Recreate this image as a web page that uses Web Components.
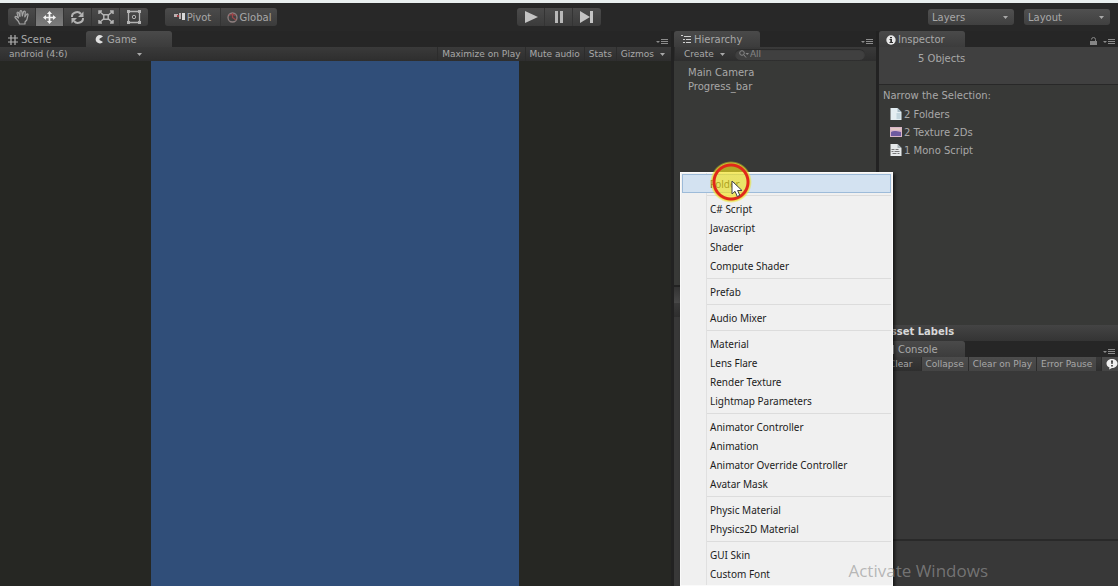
<!DOCTYPE html>
<html lang="en">
<head>
<meta charset="utf-8">
<title>Editor</title>
<style>
  html, body {
    margin: 0;
    height: 100%;
  }

  body {
    overflow: hidden;
    font-family: "DejaVu Sans", sans-serif;
    font-size: 10px;
    color: #a8a8a8;
    background: #282828;
  }
</style>
</head>
<body>
<editor-app></editor-app>

<script>
/** @const {Object} - SVG markup of every icon, by name. */
const ICONS = {
  hand: `<svg width="16" height="16" viewBox="0 0 16 16" fill="none" stroke="#a4a4a4" stroke-width="1.2" stroke-linejoin="round" stroke-linecap="round"><path d="M5.5 15 4.5 12.500 1 8.500Q1 7 2.500 7.500L4.500 9 3 4Q3.300 2.700 4.500 3.500L6 7.500 6 2.500Q6.800 1 7.800 2.300L8.300 7 9.600 2.500Q10.800 1.500 11.300 3L10.800 7.800 12.800 5Q14.200 4.500 14 6L12.800 11 11 13 11 15Z"/></svg>`,
  move: `<svg width="13" height="13" viewBox="0 0 15 15" fill="#f2f2f2"><path d="M7.500 0 10.500 3.500H8.500V6.500H11.500V4.500L15 7.500 11.500 10.500V8.500H8.500V11.500H10.500L7.500 15 4.500 11.500H6.500V8.500H3.500V10.500L0 7.500 3.500 4.500V6.500H6.500V3.500H4.500Z"/></svg>`,
  rotate: `<svg width="15" height="15" viewBox="0 0 15 15"><path d="M2 7A5 4.500 0 0 1 11 4M13 8A5 4.500 0 0 1 4 11" fill="none" stroke="#b4b4b4" stroke-width="2"/><path d="M13.500 1.500V7H8ZM1.500 13.500V8H7Z" fill="#b4b4b4"/></svg>`,
  scale: `<svg width="16" height="16" viewBox="0 0 16 16" fill="none" stroke="#b4b4b4" stroke-width="1.5"><path d="M1 5V2H4M12 2H15V5M15 11V14H12M4 14H1V11M1.500 2.500 5.500 6M14.500 2.500 10.500 6M1.500 13.500 5.500 10M14.500 13.500 10.500 10M5.800 5.800H10.200V10.200H5.800Z"/></svg>`,
  rect: `<svg width="16" height="16" viewBox="0 0 16 16" fill="none" stroke="#b4b4b4"><path stroke-width="1.300" d="M2.500 2.500H13.500V13.500H2.500Z"/><path fill="#b4b4b4" stroke="none" d="M1 1H4V4H1ZM12 1H15V4H12ZM1 12H4V15H1ZM12 12H15V15H12Z"/><circle cx="8" cy="8" r="1.700"/></svg>`,
  pivot: `<svg width="11" height="8" viewBox="0 0 11 8"><path fill="#b9b0b0" d="M0 1H4V4H0ZM5 0H7V6H5Z"/><path fill="#d9d9d9" d="M8 0H11V7H8Z"/><path fill="#a03a40" d="M3 2H5V4H3Z"/></svg>`,
  global: `<svg width="11" height="11" viewBox="0 0 11 11" fill="none"><circle cx="5.500" cy="5.500" r="4.500" stroke="#8f8080" stroke-width="1.300"/><path stroke="#a04448" stroke-width="1.200" d="M2 3.500Q5 1.500 8.500 3.500M5.500 1V5.500L9 8"/></svg>`,
  play: `<svg width="14" height="12" viewBox="0 0 14 12" fill="#c4c4c4"><path d="M1 0 14 6 1 12Z"/></svg>`,
  pause: `<svg width="10" height="12" viewBox="0 0 10 12" fill="#b8b8b8"><path d="M1 0H4V12H1ZM6 0H9V12H6Z"/></svg>`,
  step: `<svg width="14" height="12" viewBox="0 0 14 12" fill="#c4c4c4"><path d="M0 0 10 6V0H13V12H10V6L0 12Z"/></svg>`,
  scene: `<svg width="12" height="12" viewBox="0 0 12 12" fill="none" stroke="#b0b0b0" stroke-width="1.200"><path d="M4 1V11M8 1V11M1 4H11M1 8H11"/></svg>`,
  game: `<svg width="12" height="9" viewBox="-2 0 12 9" fill="#e0e0e0"><path d="M8 1.500 4.500 3.800V5L8 7A4.200 4.200 0 1 1 8 1.500Z"/></svg>`,
  hierarchy: `<svg width="11" height="9" viewBox="0 0 11 9" fill="#d0d0d0"><path d="M0 0H2V1H0ZM3 1H10V2H3ZM2 4H4V5H2ZM5 4H10V5H5ZM2 7H4V8H2ZM5 7H10V8H5Z"/></svg>`,
  info: `<svg width="10" height="10" viewBox="0 0 10 10"><circle cx="5" cy="5" r="4.700" fill="#e8e8e8"/><path fill="#303030" d="M4 2H6V3.300H4ZM3.500 4H6V7H7V8H3.500V7H4.300V5H3.500Z"/></svg>`,
  console: `<svg width="10" height="9" viewBox="0 0 10 9"><path fill="#c8c8c8" d="M0 0H8V9H0Z"/><path fill="#444" d="M1 2H7V3H1ZM1 5H7V6H1Z"/></svg>`,
  alert: `<svg width="12" height="12" viewBox="0 0 12 12"><path fill="#f0f0f0" d="M6 1C9 1 11.500 3 11.500 5.500S9 10 6 10L3 11.500 3.500 9.500C1.500 8.500.500 7.500.500 5.500.500 3 3 1 6 1Z"/><path fill="#333" d="M5 2.500H7L6.600 6H5.400ZM5.200 7H6.800V8.500H5.200Z"/></svg>`,
  panelMenu: `<svg width="12" height="6" viewBox="0 0 12 6" fill="#8c8c8c"><path d="M0 2H4L2 4ZM5 0H12V1H5ZM5 2H12V3H5ZM5 4H12V5H5Z"/></svg>`,
  lock: `<svg width="7" height="8" viewBox="0 0 7 8"><path fill="#858585" d="M0 4H7V8H0Z"/><path fill="none" stroke="#858585" d="M1.500 2.500Q1.500.500 3.500.500T5.500 2.500V4"/></svg>`,
  arrow: `<svg width="5" height="3" viewBox="0 0 5 3" fill="#a8a8a8"><path d="M0 0H5L2.500 3Z"/></svg>`,
  search: `<svg width="11" height="8" viewBox="0 0 11 8" fill="none" stroke="#888"><circle cx="3" cy="3" r="2.300"/><path d="M4.700 4.700 7 7.500"/><path d="M6.500 3H10L8.200 5Z" fill="#888" stroke="none"/></svg>`,
  folder: `<svg width="11" height="12" viewBox="0 0 11 12"><path fill="#e4eef2" d="M0 0H7L11 4V12H0Z"/><path fill="#a8bcc6" d="M7 0V4H11Z"/><path fill="#c3d6de" d="M6 5H10V11H6Z"/></svg>`,
  texture: `<svg width="12" height="10" viewBox="0 0 12 10"><path fill="#d9b6c8" d="M0 0H12V10H0Z"/><path fill="#6f5aa0" d="M1 9V5Q3 3.500 6 4T11 5V9Z"/><path fill="#e4c8c4" d="M1 1H11V3H1Z"/></svg>`,
  script: `<svg width="11" height="12" viewBox="0 0 11 12"><path fill="#e6e9ea" d="M0 0H7L11 4V12H0Z"/><path fill="#a8b2b6" d="M7 0V4H11Z"/><path fill="#777" d="M1 5H4V6H1ZM5 5H8V6H5ZM1 7H3V8H1ZM4 7H9V8H4ZM2 9H6V10H2ZM7 9H9V10H7Z"/></svg>`,
  pointer: `<svg width="13" height="18" viewBox="0 0 13 18"><path fill="#fff" stroke="#444" d="M1 1V14L4 11.300 6.300 16.500 8.800 15.300 6.600 10.500H11Z"/></svg>`
};

/**
 * Attach an open shadow root holding the given markup.
 *
 * @param {HTMLElement} host - The custom element.
 * @param {string} html - Styles and markup.
 * @return {ShadowRoot}
 */
function render(host, html) {
  const template = document.createElement("template");
  template.innerHTML = `
    <style>
      :host { display: block; box-sizing: border-box; }
      *, *::before { box-sizing: border-box; }
      svg { display: block; flex: none; }
      button, input, select {
        margin: 0; padding: 0; border: 0; background: none;
        font: inherit; color: inherit; outline: 0; appearance: none;
      }
      button { white-space: nowrap; }
    </style>${html}`;
  const root = host.attachShadow({ mode: "open" });
  root.appendChild(template.content.cloneNode(true));
  return root;
}

class ButtonStrip extends HTMLElement {
  constructor() {
    super();
    render(this, `
      <style>
        :host { flex: none; }
        div {
          display: flex;
          height: 18px;
          border-radius: 3px;
          overflow: hidden;
          background: linear-gradient(#4b4b4b, #3b3b3b);
        }
        ::slotted(*) { flex: none; }
      </style>
      <div><slot></slot></div>`);
  }
}

class ToolButton extends HTMLElement {
  constructor() {
    super();
    const icon = ICONS[this.getAttribute("icon")] || "";
    render(this, `
      <style>
        button {
          display: flex;
          align-items: center;
          justify-content: center;
          gap: 2px;
          width: 100%;
          min-width: 28px;
          height: 18px;
          padding: 0 4px;
          border-right: 1px solid #343434;
        }
        :host([wide]) button { min-width: 56px; }
        :host(:last-child) button { border-right: 0; }
        :host([active]) button { background: linear-gradient(#686868, #7c7c7c); }
      </style>
      <button type="button" aria-label="${this.getAttribute("label") || this.textContent}">${icon}<slot></slot></button>`);
  }
}

class DropDown extends HTMLElement {
  constructor() {
    super();
    const label = this.getAttribute("label");
    render(this, `
      <style>
        :host { flex: none; width: 86px; }
        label {
          display: flex;
          align-items: center;
          height: 16px;
          padding: 0 6px 0 4px;
          border-radius: 3px;
          background: linear-gradient(#505050, #404040);
        }
        :host([flat]) { width: 148px; }
        :host([flat]) label { padding-left: 9px; background: none; border-radius: 0; }
        select { flex: 1; min-width: 0; }
      </style>
      <label><select aria-label="${label}"><option>${label}</option></select>${ICONS.arrow}</label>`);
  }
}

class MainToolbar extends HTMLElement {
  constructor() {
    super();
    render(this, `
      <style>
        header {
          display: grid;
          grid-template-columns: 1fr auto 1fr;
          align-items: center;
          height: 31px;
          padding: 0 8px;
          border-top: 3px solid #e9efef;
          background: #282828;
        }
        .left { display: flex; gap: 17px; }
        .right { display: flex; justify-content: flex-end; gap: 10px; }
      </style>
      <header>
        <div class="left">
          <button-strip>
            <tool-button icon="hand" label="Hand"></tool-button>
            <tool-button icon="move" label="Move" active></tool-button>
            <tool-button icon="rotate" label="Rotate"></tool-button>
            <tool-button icon="scale" label="Scale"></tool-button>
            <tool-button icon="rect" label="Rect"></tool-button>
          </button-strip>
          <button-strip>
            <tool-button icon="pivot" wide>Pivot</tool-button>
            <tool-button icon="global" wide>Global</tool-button>
          </button-strip>
        </div>
        <button-strip>
          <tool-button icon="play" label="Play"></tool-button>
          <tool-button icon="pause" label="Pause"></tool-button>
          <tool-button icon="step" label="Step"></tool-button>
        </button-strip>
        <div class="right">
          <drop-down label="Layers"></drop-down>
          <drop-down label="Layout"></drop-down>
        </div>
      </header>`);
  }
}

class PanelTab extends HTMLElement {
  constructor() {
    super();
    render(this, `
      <style>
        :host { flex: none; width: 86px; }
        button {
          display: flex;
          align-items: center;
          gap: 2px;
          width: 100%;
          height: 16px;
          padding: 1px 7px 0;
          border-radius: 3px 3px 0 0;
        }
        :host([active]) button { background: linear-gradient(#4a4a4a, #3c3c3c); }
      </style>
      <button type="button">${ICONS[this.getAttribute("icon")]}<slot></slot></button>`);
  }
}

class EditorPanel extends HTMLElement {
  constructor() {
    super();
    const lock = this.hasAttribute("lockable") ? ICONS.lock : "";
    render(this, `
      <style>
        :host { display: flex; flex-direction: column; min-width: 0; min-height: 0; }
        .tabs { display: flex; flex: none; height: 16px; background: var(--panel-tabs, #262626); }
        .menu { display: flex; align-items: flex-end; gap: 6px; margin-left: auto; padding: 0 3px 2px; }
        .bar {
          display: flex;
          flex: none;
          align-items: center;
          height: 14px;
          font-size: 9px;
          background: linear-gradient(#3a3a3a, #2e2e2e);
        }
        :host([barless]) .bar { display: none; }
        .body { flex: 1; min-height: 0; background: var(--panel-body, #383838); }
      </style>
      <div class="tabs">
        <slot name="tab"></slot>
        <div class="menu">${lock}<button type="button" aria-label="Panel menu">${ICONS.panelMenu}</button></div>
      </div>
      <div class="bar"><slot name="bar"></slot></div>
      <div class="body"><slot></slot></div>`);
  }
}

class SearchField extends HTMLElement {
  constructor() {
    super();
    render(this, `
      <style>
        :host { flex: 1; min-width: 0; margin: 0 11px 0 6px; }
        label {
          display: flex;
          align-items: center;
          height: 11px;
          padding: 0 4px;
          border-radius: 6px;
          background: #404040;
          color: #858585;
          box-shadow: inset 0 1px 1px #2a2a2a;
        }
        input { flex: 1; min-width: 0; height: 11px; }
      </style>
      <label>${ICONS.search}<input type="text" aria-label="Search" value="All"></label>`);
  }
}

class GameView extends HTMLElement {
  constructor() {
    super();
    render(this, `
      <style>
        :host { height: 100%; background: #262723; }
        .stage { height: 100%; margin: 0 152px 0 151px; background: #304e79; }
      </style>
      <div class="stage"></div>`);
  }
}

class SelectionRow extends HTMLElement {
  constructor() {
    super();
    render(this, `
      <style>
        button { display: flex; align-items: center; gap: 2px; height: 18px; padding-left: 11px; }
        svg { width: 12px; }
      </style>
      <button type="button">${ICONS[this.getAttribute("icon")]}<slot></slot></button>`);
  }
}

class CreateMenu extends HTMLElement {
  constructor() {
    super();
    /** @const {Array[]} - Menu entries; a separator stands between two groups. */
    const groups = [
      ["Folder"],
      ["C# Script", "Javascript", "Shader", "Compute Shader"],
      ["Prefab"],
      ["Audio Mixer"],
      ["Material", "Lens Flare", "Render Texture", "Lightmap Parameters"],
      ["Animator Controller", "Animation", "Animator Override Controller", "Avatar Mask"],
      ["Physic Material", "Physics2D Material"],
      ["GUI Skin", "Custom Font"]
    ];
    const root = render(this, `
      <style>
        .menu {
          min-height: 100%;
          padding: 1px;
          border: 1px solid #fafafa;
          color: #1c1c1c;
          background: linear-gradient(90deg, #f0f0f0 25px, #e0e0e0 25px, #e0e0e0 26px, #f0f0f0 26px);
          font-family: "Noto Sans", sans-serif;
          font-size: 10px;
          box-shadow: 2px 2px 3px rgba(0, 0, 0, 0.6);
        }
        button { display: block; width: 100%; height: 19px; padding-left: 28px; text-align: left; }
        button.hover { background: #d3e2f1; box-shadow: 0 0 0 1px #9dbbd9 inset; }
        hr { height: 1px; margin: 3px 0 3px 25px; border: 0; background: #dcdcdc; }
        button.hover + hr { margin-top: 2px; }
      </style>
      <div class="menu" role="menu"></div>`);
    root.querySelector(".menu").innerHTML = groups
      .map(group => group.map(item => `<button type="button" role="menuitem">${item}</button>`).join(""))
      .join("<hr>");
    root.querySelector("button").classList.add("hover");
  }
}

class ClickMarker extends HTMLElement {
  constructor() {
    super();
    render(this, `
      <style>
        :host { width: 42px; height: 42px; pointer-events: none; }
        .ring {
          width: 42px;
          height: 42px;
          border-radius: 50%;
          background: radial-gradient(circle, rgba(245, 228, 30, 0.65) 15px, #e0281a 16px, #e0281a 18px, rgba(235, 225, 40, 0.8) 19px, rgba(235, 225, 40, 0) 21px);
        }
        svg { position: absolute; left: 21px; top: 19px; }
      </style>
      <div class="ring"></div>${ICONS.pointer}`);
  }
}

class EditorApp extends HTMLElement {
  constructor() {
    super();
    render(this, `
      <style>
        :host { position: relative; display: flex; flex-direction: column; height: 100vh; overflow: hidden; }
        main {
          flex: 1;
          display: grid;
          grid-template-columns: 1fr 202px 239px;
          gap: 3px;
          min-height: 0;
          background: #222;
        }
        .column { display: flex; flex-direction: column; min-width: 0; min-height: 0; }
        .column > editor-panel { flex: none; }
        .column > .grow { flex: 1; }
        .game { --panel-body: #262723; }
        .hierarchy, .inspector-panel { --panel-body: #383937; }
        .hierarchy { height: 254px; margin-bottom: 2px; }
        .project { --panel-tabs: linear-gradient(#333, #484848); }
        .inspector-panel { height: 294px; }
        .bar-button { height: 14px; padding: 0 4px; border-left: 1px solid #2c2c2c; }
        .bar-group { display: flex; margin-left: auto; padding-right: 2px; }
        .with-arrow { display: flex; align-items: center; gap: 6px; }
        .create, .clear { padding-left: 9px; }
        .clear { margin-right: 4px; }
        .messages { margin-left: 5px; }
        ul { margin: 0; padding: 5px 14px; list-style: none; line-height: 14px; }
        .objects { height: 38px; padding: 6px 39px; border-bottom: 1px solid #282828; background: #404040; }
        .narrow { height: 20px; padding: 5px 4px; margin: 0; }
        .labels {
          flex: none;
          height: 16px;
          padding: 0 4px;
          line-height: 14px;
          font-weight: bold;
          color: #d8d8d8;
          background: linear-gradient(#444, #343434);
        }
        .pressed { background: linear-gradient(#4c4c4c, #444); }
        .log { height: 170px; border-bottom: 2px solid #292929; }
        create-menu { position: absolute; top: 172px; right: 225px; bottom: 0; width: 213px; }
        click-marker { position: absolute; top: 161px; right: 366px; }
        .watermark {
          position: absolute;
          right: 130px;
          bottom: 3px;
          font-family: "Open Sans", sans-serif;
          font-size: 17px;
          line-height: 24px;
          color: rgba(150, 150, 150, 0.65);
          pointer-events: none;
        }
      </style>
      <main-toolbar></main-toolbar>
      <main>
        <editor-panel class="game">
          <panel-tab slot="tab" icon="scene">Scene</panel-tab>
          <panel-tab slot="tab" icon="game" active>Game</panel-tab>
          <drop-down slot="bar" label="android (4:6)" flat></drop-down>
          <div slot="bar" class="bar-group">
            <button class="bar-button" type="button">Maximize on Play</button>
            <button class="bar-button" type="button">Mute audio</button>
            <button class="bar-button" type="button">Stats</button>
            <button class="bar-button with-arrow" type="button">Gizmos ${ICONS.arrow}</button>
          </div>
          <game-view></game-view>
        </editor-panel>
        <div class="column">
          <editor-panel class="hierarchy">
            <panel-tab slot="tab" icon="hierarchy" active>Hierarchy</panel-tab>
            <button slot="bar" class="bar-button with-arrow create" type="button">Create ${ICONS.arrow}</button>
            <search-field slot="bar"></search-field>
            <ul>
              <li>Main Camera</li>
              <li>Progress_bar</li>
            </ul>
          </editor-panel>
          <editor-panel class="grow project"></editor-panel>
        </div>
        <div class="column">
          <editor-panel class="inspector-panel" barless lockable>
            <panel-tab slot="tab" icon="info" active>Inspector</panel-tab>
            <div class="objects">5 Objects</div>
            <p class="narrow">Narrow the Selection:</p>
            <selection-row icon="folder">2 Folders</selection-row>
            <selection-row icon="texture">2 Texture 2Ds</selection-row>
            <selection-row icon="script">1 Mono Script</selection-row>
          </editor-panel>
          <div class="labels">Asset Labels</div>
          <editor-panel class="grow">
            <panel-tab slot="tab" icon="console" active>Console</panel-tab>
            <button slot="bar" class="bar-button clear" type="button">Clear</button>
            <button slot="bar" class="bar-button pressed" type="button">Collapse</button>
            <button slot="bar" class="bar-button pressed" type="button">Clear on Play</button>
            <button slot="bar" class="bar-button pressed" type="button">Error Pause</button>
            <button slot="bar" class="bar-button pressed messages" type="button" aria-label="Messages">${ICONS.alert}</button>
            <div class="log"></div>
          </editor-panel>
        </div>
      </main>
      <create-menu></create-menu>
      <click-marker></click-marker>
      <div class="watermark">Activate Windows</div>`);
  }
}

//  Define the web components, the parts before the app that uses them.
customElements.define("button-strip", ButtonStrip);
customElements.define("tool-button", ToolButton);
customElements.define("drop-down", DropDown);
customElements.define("main-toolbar", MainToolbar);
customElements.define("panel-tab", PanelTab);
customElements.define("editor-panel", EditorPanel);
customElements.define("search-field", SearchField);
customElements.define("game-view", GameView);
customElements.define("selection-row", SelectionRow);
customElements.define("create-menu", CreateMenu);
customElements.define("click-marker", ClickMarker);
customElements.define("editor-app", EditorApp);
</script>
</body>
</html>
